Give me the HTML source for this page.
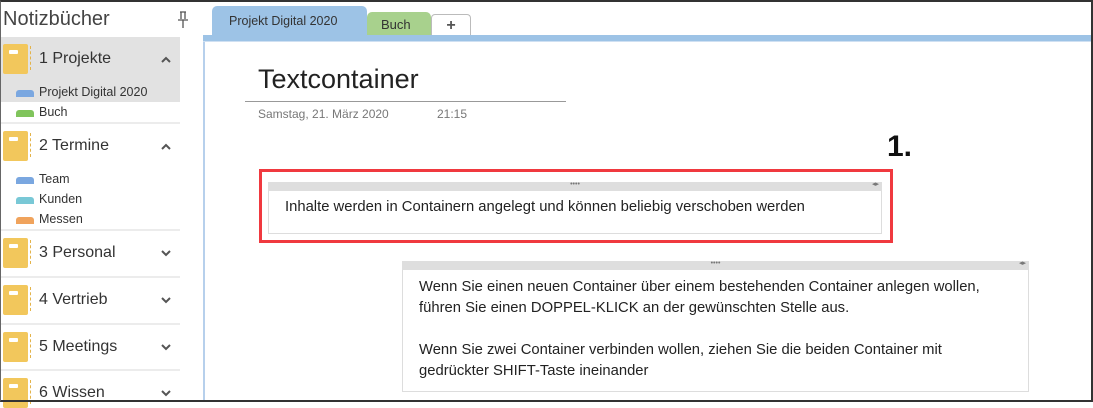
<!DOCTYPE html>
<html><head><meta charset="utf-8"><style>
*{margin:0;padding:0;box-sizing:border-box}
body{width:1093px;height:402px;position:relative;overflow:hidden;background:#fff;font-family:"Liberation Sans",sans-serif;color:#222}
.abs{position:absolute}
.frame{left:0;top:0;width:1093px;height:402px;border-top:2px solid #333;border-right:2px solid #333;border-bottom:2px solid #333;border-left:1px solid #666;z-index:10;pointer-events:none}
.nb{position:absolute;left:0;width:180px;font-size:16px;color:#333}
.book{position:absolute;left:3px;width:25px;height:30px;background:#f2c75c;border-radius:2px}
.book:before{content:"";position:absolute;left:6px;top:6px;width:9px;height:4px;background:#fff;border-radius:1px}
.book:after{content:"";position:absolute;right:-3px;top:2px;width:2px;height:24px;border-right:1px dashed #e3b34a}
.sec{position:absolute;left:39px;font-size:12.5px;color:#333}
.tag{position:absolute;left:16px;width:18px;height:7px;border-radius:3px 3px 0 0}
.sep{position:absolute;left:0;width:180px;height:2px;background:#ececec}
.chev{position:absolute;left:161px}
</style></head><body>
<div class="abs" style="left:3px;top:8px;font-size:20px;color:#444">Notizbücher</div>
<svg class="abs" style="left:176px;top:10px" width="14" height="20" viewBox="0 0 14 20"><path d="M4 2h6M5 2v7M9 2v7M2 10h10M7 10v8" stroke="#555" stroke-width="1.3" fill="none"/></svg>
<div class="abs" style="left:0;top:37px;width:180px;height:65px;background:#e2e2e2"></div>
<div class="book" style="top:44px"></div><div class="abs nb" style="left:39px;top:50px">1 Projekte</div><svg class="chev" style="top:56px" width="10" height="7"><path d="M1 6L5 2L9 6" stroke="#555" stroke-width="2" fill="none"/></svg>
<div class="tag" style="top:90px;background:#7aa7e0"></div><div class="sec" style="top:85px">Projekt Digital 2020</div>
<div class="tag" style="top:110px;background:#80c45c"></div><div class="sec" style="top:105px">Buch</div>
<div class="sep" style="top:122px"></div>
<div class="book" style="top:131px"></div><div class="abs nb" style="left:39px;top:137px">2 Termine</div><svg class="chev" style="top:143px" width="10" height="7"><path d="M1 6L5 2L9 6" stroke="#555" stroke-width="2" fill="none"/></svg>
<div class="tag" style="top:177px;background:#7aa7e0"></div><div class="sec" style="top:172px">Team</div>
<div class="tag" style="top:197px;background:#79c8d6"></div><div class="sec" style="top:192px">Kunden</div>
<div class="tag" style="top:217px;background:#f0a35c"></div><div class="sec" style="top:212px">Messen</div>
<div class="sep" style="top:229px"></div>
<div class="book" style="top:238px"></div><div class="abs nb" style="left:39px;top:244px">3 Personal</div><svg class="chev" style="top:250px" width="10" height="7"><path d="M1 1L5 5L9 1" stroke="#555" stroke-width="2" fill="none"/></svg>
<div class="sep" style="top:276px"></div>
<div class="book" style="top:285px"></div><div class="abs nb" style="left:39px;top:291px">4 Vertrieb</div><svg class="chev" style="top:297px" width="10" height="7"><path d="M1 1L5 5L9 1" stroke="#555" stroke-width="2" fill="none"/></svg>
<div class="sep" style="top:323px"></div>
<div class="book" style="top:332px"></div><div class="abs nb" style="left:39px;top:338px">5 Meetings</div><svg class="chev" style="top:344px" width="10" height="7"><path d="M1 1L5 5L9 1" stroke="#555" stroke-width="2" fill="none"/></svg>
<div class="sep" style="top:369px"></div>
<div class="book" style="top:378px"></div><div class="abs nb" style="left:39px;top:384px">6 Wissen</div><svg class="chev" style="top:390px" width="10" height="7"><path d="M1 1L5 5L9 1" stroke="#555" stroke-width="2" fill="none"/></svg>
<div class="abs" style="left:203px;top:35px;width:2px;height:367px;background:#b7d0ec"></div>
<div class="abs" style="left:212px;top:6px;width:155px;height:31px;background:#9dc3e6;border-radius:5px 5px 0 0"></div>
<div class="abs" style="left:229px;top:14px;font-size:12.5px;color:#333">Projekt Digital 2020</div>
<div class="abs" style="left:367px;top:12px;width:64px;height:25px;background:#a8d18d;border-radius:5px 5px 0 0"></div>
<div class="abs" style="left:381px;top:17px;font-size:13px;color:#333">Buch</div>
<div class="abs" style="left:431px;top:14px;width:40px;height:23px;background:#fff;border:1px solid #bbb;border-bottom:none;border-radius:4px 4px 0 0;text-align:center;font-size:16px;font-weight:bold;color:#555;line-height:22px">+</div>
<div class="abs" style="left:203px;top:35px;width:890px;height:7px;background:#9dc3e6;border-bottom:1px solid #cfe0f2"></div>
<div class="abs" style="left:258px;top:64px;font-size:27px;color:#222">Textcontainer</div>
<div class="abs" style="left:245px;top:101px;width:321px;height:1px;background:#999"></div>
<div class="abs" style="left:258px;top:107px;font-size:12px;color:#777">Samstag, 21. März 2020</div>
<div class="abs" style="left:437px;top:107px;font-size:12px;color:#777">21:15</div>
<div class="abs" style="left:887px;top:130px;font-size:30px;font-weight:bold;color:#111">1.</div>
<div class="abs" style="left:259px;top:169px;width:634px;height:74px;border:3px solid #f0393f"></div>
<div class="abs" style="left:268px;top:182px;width:614px;height:52px;border:1px solid #ddd"></div>
<div class="abs" style="left:268px;top:182px;width:614px;height:9px;background:#dedede;font-size:7px;text-align:center;color:#777;line-height:6px">••••<span style="position:absolute;right:3px">◂▸</span></div>
<div class="abs" style="left:285px;top:199px;font-size:14.8px;color:#222">Inhalte werden in Containern angelegt und können beliebig verschoben werden</div>
<div class="abs" style="left:402px;top:261px;width:627px;height:131px;border:1px solid #ddd"></div>
<div class="abs" style="left:402px;top:261px;width:627px;height:9px;background:#dedede;font-size:7px;text-align:center;color:#777;line-height:6px">••••<span style="position:absolute;right:3px">◂▸</span></div>
<div class="abs" style="left:419px;top:277px;font-size:14.8px;line-height:21px;color:#222">Wenn Sie einen neuen Container über einem bestehenden Container anlegen wollen,<br>führen Sie einen DOPPEL-KLICK an der gewünschten Stelle aus.<br><br>Wenn Sie zwei Container verbinden wollen, ziehen Sie die beiden Container mit<br>gedrückter SHIFT-Taste ineinander</div>
<div class="abs frame"></div>
</body></html>
